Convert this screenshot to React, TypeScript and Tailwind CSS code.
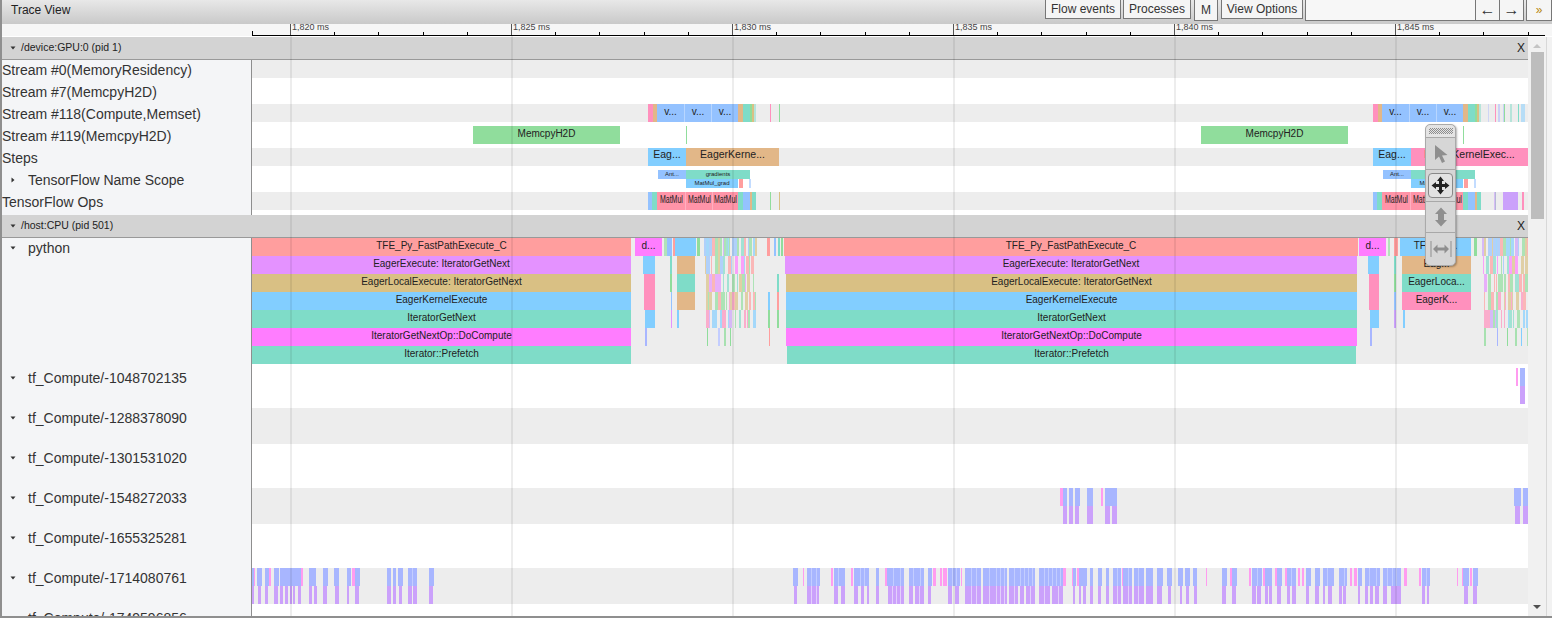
import type { ReactNode } from "react"

const salmon = "#ff9e9e"
const purple = "#e492ff"
const tan = "#d9c084"
const blue = "#82ceff"
const teal = "#7fdcc8"
const magenta = "#ff7dff"
const peach = "#e2b788"
const pink = "#ff90bd"
const periwinkle = "#94c2ff"
const green = "#90dd9c"
const lav = "#a8b6ff"
const violet = "#cba1fb"
const hot = "#ff9cf0"

type Seg = [number, number, string, string?]

// page x coordinates, the tracks start at 252
function Bar({ x0, x1, top, h = 18, c, label, fs = "text-[10px]", squeeze }: { x0: number; x1: number; top: number; h?: number; c: string; label?: string; fs?: string; squeeze?: boolean }) {
  return (
    <div
      className={`absolute flex items-center justify-center overflow-hidden whitespace-nowrap text-[#222] ${fs}`}
      style={{ left: x0 - 252, width: x1 - x0, top, height: h, backgroundColor: c }}
    >
      {label && <span className={`shrink-0 ${h > 9 ? "-mt-1" : ""} ${squeeze ? "scale-x-[0.7]" : ""}`}>{label}</span>}
    </div>
  )
}

function Segs({ items, top, h = 18, fs, squeeze }: { items: Seg[]; top: number; h?: number; fs?: string; squeeze?: boolean }) {
  return (
    <>
      {items.map((s, i) => (
        <Bar key={i} x0={s[0]} x1={s[1]} top={top} h={h} c={s[2]} label={s[3]} fs={fs} squeeze={squeeze} />
      ))}
    </>
  )
}

function Arrow({ open }: { open: boolean }) {
  return (
    <svg width="6" height="6" viewBox="0 0 6 6" className="shrink-0">
      {open ? <path d="M0.5 1.5 L5.5 1.5 L3 4.5 Z" fill="#333" /> : <path d="M1.5 0.5 L4.5 3 L1.5 5.5 Z" fill="#333" />}
    </svg>
  )
}

function Track({ label, arrow, gray, height, children }: { label: string; arrow?: "open" | "closed"; gray?: boolean; height: number; children?: ReactNode }) {
  return (
    <div className="flex shrink-0" style={{ height }}>
      <div className="w-[250px] shrink-0 border-r border-[#8e8e8e]">
        <div className={`flex h-[18px] items-center whitespace-nowrap text-sm leading-[18px] text-[#333] ${gray ? "mt-px" : "mt-[5px]"} ${arrow ? "pl-2" : ""}`}>
          {arrow && <Arrow open={arrow === "open"} />}
          <span className={arrow ? "ml-[12px]" : ""}>{label}</span>
        </div>
      </div>
      <div className={`relative flex-1 ${gray ? "bg-[#ededed]" : "bg-white"}`}>{children}</div>
    </div>
  )
}

function ProcessHeader({ name, h }: { name: string; h: string }) {
  return (
    <div className={`flex shrink-0 items-center justify-between border-b border-[#999] bg-[#d3d3d3] pr-[3px] pl-2 text-[10px] text-[#222] ${h}`}>
      <div className="flex items-center gap-[5px]">
        <Arrow open />
        <span className="text-[10.5px]">{name}</span>
      </div>
      <span className="text-xs">X</span>
    </div>
  )
}

function ToolButton({ children, w, h = "h-5" }: { children: ReactNode; w: string; h?: string }) {
  return (
    <div className={`flex items-center justify-center border border-[#777] bg-[#f5f5f5] text-xs text-[#333] ${w} ${h}`}>{children}</div>
  )
}

// Deterministic thin coloured stripes for the busy parts of the trace
function stripes(x0: number, x1: number, seed: number, colors: string[], density = 0.6): Seg[] {
  const out: Seg[] = []
  let s = seed
  let x = x0
  while (x < x1) {
    s = (s * 1103515245 + 12345) & 0x7fffffff
    const w = 1 + (s >> 8) % 3
    const gap = (s >> 12) % 100 < density * 100 ? 0 : 1 + (s >> 16) % 3
    out.push([x, Math.min(x + w, x1), colors[(s >> 18) % colors.length] + "b0"])
    x += w + gap
  }
  return out
}

const busy = [salmon, periwinkle, green, teal, violet, tan, blue, green]

const pyRows: Seg[][] = [
  [
    [252, 631, salmon, "TFE_Py_FastPathExecute_C"],
    [635, 662, magenta, "d..."],
    [664, 667, green + "a0"],
    [667, 672, periwinkle],
    [673, 675, salmon],
    [675, 696, blue],
    [697, 700, green],
    ...stripes(704, 757, 11, busy, 0.85),
    [767, 770, salmon],
    [774, 776, periwinkle],
    [778, 780, teal],
    [781, 783, green],
    [784, 1358, salmon, "TFE_Py_FastPathExecute_C"],
    [1359, 1386, magenta, "d..."],
    [1388, 1390, green + "a0"],
    [1394, 1398, salmon],
    [1400, 1471, blue, "TFE_Py..."],
    [1474, 1477, green],
    ...stripes(1482, 1528, 23, busy, 0.85),
  ],
  [
    [252, 631, purple, "EagerExecute: IteratorGetNext"],
    [643, 655, blue],
    [670, 672, teal],
    [677, 695, peach],
    ...stripes(705, 756, 37, [salmon, teal, magenta, green, tan, periwinkle], 0.45),
    [785, 1357, purple, "EagerExecute: IteratorGetNext"],
    [1368, 1379, blue],
    [1394, 1396, teal],
    [1402, 1471, peach, "Eag..."],
    ...stripes(1483, 1528, 41, [salmon, teal, magenta, green, tan, periwinkle], 0.45),
  ],
  [
    [252, 631, tan, "EagerLocalExecute: IteratorGetNext"],
    [644, 655, pink],
    [670, 672, green],
    [677, 695, teal],
    ...stripes(706, 756, 53, [teal, green, purple, tan, salmon], 0.4),
    [777, 779, teal],
    [786, 1357, tan, "EagerLocalExecute: IteratorGetNext"],
    [1369, 1379, pink],
    [1394, 1396, green],
    [1402, 1471, teal, "EagerLoca..."],
    ...stripes(1484, 1528, 61, [teal, green, purple, tan, salmon], 0.4),
  ],
  [
    [252, 631, blue, "EagerKernelExecute"],
    [644, 655, pink],
    [671, 672, periwinkle],
    [677, 695, peach],
    ...stripes(706, 756, 71, [pink, green, salmon, tan], 0.55),
    [768, 770, blue],
    [777, 779, salmon],
    [786, 1357, blue, "EagerKernelExecute"],
    [1369, 1379, pink],
    [1394, 1396, periwinkle],
    [1402, 1471, pink, "EagerK..."],
    ...stripes(1484, 1528, 83, [pink, green, salmon, tan], 0.55),
  ],
  [
    [252, 631, teal, "IteratorGetNext"],
    [645, 655, blue],
    [671, 672, purple],
    [677, 679, blue],
    ...stripes(706, 756, 97, [pink, violet, teal, blue, green], 0.45),
    [768, 770, green],
    [777, 779, green],
    [786, 1357, teal, "IteratorGetNext"],
    [1370, 1379, blue],
    [1394, 1396, violet],
    [1403, 1405, blue],
    ...stripes(1484, 1528, 101, [pink, violet, teal, blue, green], 0.45),
  ],
  [
    [252, 631, magenta, "IteratorGetNextOp::DoCompute"],
    [645, 647, lav],
    [707, 708, green],
    [718, 720, "#c3cdff"],
    [724, 726, green + "c0"],
    [730, 731, green],
    [769, 770, salmon],
    [786, 1357, magenta, "IteratorGetNextOp::DoCompute"],
    [1370, 1372, lav],
    [1484, 1486, green + "c0"],
    [1497, 1498, lav],
    [1507, 1508, green],
    [1515, 1517, green + "c0"],
    [1521, 1522, blue],
    [1527, 1528, green + "a0"],
  ],
  [
    [252, 631, teal, "Iterator::Prefetch"],
    [787, 1356, teal, "Iterator::Prefetch"],
  ],
]

const t1718 = {
  blue: [[252, 254], [257, 262], [265, 269], [274, 279], [280, 285], [285, 288], [288, 292], [292, 296], [296, 301], [309, 316], [323, 328], [334, 339], [347, 351], [355, 360], [387, 391], [393, 396], [398, 403], [408, 417], [429, 434], [793, 798], [807, 820], [834, 845], [854, 869], [876, 879], [887, 904], [909, 924], [928, 932], [948, 960], [965, 981], [983, 1007], [1009, 1035], [1039, 1063], [1073, 1076], [1079, 1087], [1090, 1093], [1098, 1102], [1106, 1109], [1113, 1121], [1123, 1132], [1134, 1144], [1146, 1153], [1157, 1163], [1167, 1172], [1178, 1183], [1185, 1190], [1193, 1197], [1222, 1227], [1232, 1237], [1252, 1262], [1265, 1272], [1277, 1282], [1287, 1296], [1306, 1311], [1315, 1320], [1323, 1334], [1339, 1347], [1358, 1362], [1365, 1380], [1383, 1401], [1422, 1430], [1463, 1469], [1473, 1478]],
  violet: [[252, 254], [258, 261], [265, 268], [274, 278], [280, 283], [285, 288], [290, 292], [293, 295], [298, 301], [309, 312], [314, 317], [323, 327], [335, 339], [347, 349], [355, 359], [387, 391], [393, 396], [399, 402], [408, 412], [413, 417], [429, 433], [794, 797], [807, 819], [834, 838], [841, 845], [854, 858], [861, 864], [867, 869], [876, 879], [888, 904], [909, 913], [915, 924], [928, 931], [948, 952], [955, 959], [965, 981], [983, 1007], [1009, 1018], [1020, 1024], [1026, 1035], [1039, 1050], [1052, 1063], [1073, 1075], [1079, 1081], [1083, 1086], [1090, 1093], [1098, 1101], [1106, 1109], [1113, 1121], [1123, 1132], [1134, 1144], [1146, 1153], [1157, 1162], [1168, 1171], [1180, 1182], [1186, 1189], [1194, 1197], [1222, 1226], [1232, 1236], [1252, 1256], [1257, 1261], [1265, 1268], [1269, 1272], [1277, 1281], [1287, 1290], [1292, 1296], [1306, 1309], [1315, 1319], [1323, 1325], [1328, 1332], [1339, 1342], [1343, 1346], [1358, 1360], [1365, 1368], [1370, 1373], [1375, 1379], [1383, 1387], [1391, 1397], [1397, 1401], [1422, 1425], [1427, 1429], [1464, 1468], [1473, 1477]],
  hot: [[253, 255], [269, 271], [301, 303], [352, 355], [803, 804], [831, 833], [851, 853], [866, 868], [885, 887], [913, 915], [933, 936], [940, 942], [943, 947], [961, 962], [1063, 1066], [1072, 1073], [1077, 1079], [1122, 1123], [1206, 1207], [1230, 1232], [1249, 1251], [1263, 1265], [1275, 1277], [1285, 1287], [1298, 1300], [1302, 1304], [1350, 1352], [1354, 1357], [1388, 1390], [1404, 1407], [1419, 1421], [1457, 1458], [1462, 1463], [1470, 1472]],
}

const ticks = [290, 511, 732, 953, 1174, 1395]

// long runs are really many short events, so they get faint seams
function pairs(list: number[][], c: string, seam?: string): Seg[] {
  const out: Seg[] = []
  for (const [a, b] of list) {
    out.push([a, b, c])
    if (seam && b - a > 7) {
      for (let x = a + 4 + (a % 3); x < b - 2; x += 4 + ((x * 7) % 4)) out.push([x, x + 1, seam])
    }
  }
  return out
}

export default function App() {
  return (
    <div className="relative flex h-screen w-[1552px] flex-col overflow-hidden border-b-2 border-l-2 border-[#8f8f8f] bg-[#f4f5f7] font-['Liberation_Sans',Arial,sans-serif]">
      {/* toolbar */}
      <div className="relative z-10 flex h-6 shrink-0 items-start justify-between bg-gradient-to-b from-[#e8e8e8] to-[#c9c9c9] pl-[9px]">
        <span className="mt-[2px] text-xs text-[#222]">Trace View</span>
        <div className="-mt-[1px] flex items-start">
          <div className="mr-[2px]"><ToolButton w="w-[76px]" h="h-[20px]">Flow events</ToolButton></div>
          <div className="mr-[3px]"><ToolButton w="w-[68px]" h="h-[20px]">Processes</ToolButton></div>
          <div className="mr-[3px]"><ToolButton w="w-[24px]" h="h-[22px]">M</ToolButton></div>
          <div className="mr-[2px]"><ToolButton w="w-[82px]" h="h-[20px]">View Options</ToolButton></div>
          <div className="h-[22px] w-[171px] border border-[#777] bg-[#f7f7f7]" />
          <div className="-ml-px flex h-[22px] w-[25px] items-center justify-center border border-[#777] bg-[#f5f5f5] text-base leading-none text-[#333]">←</div>
          <div className="-ml-px flex h-[22px] w-[25px] items-center justify-center border border-[#777] bg-[#f5f5f5] text-base leading-none text-[#333]">→</div>
          <div className="ml-[2px] flex h-[22px] w-[26px] items-center justify-center border border-[#777] bg-[#f5f5f5] text-xs text-[#b8860b]">»</div>
        </div>
      </div>

      {/* ruler */}
      <div className="flex h-3 shrink-0 bg-[#f6f6f6]">
        <div className="w-[250px] shrink-0" />
        <div className="relative w-[1293px] overflow-hidden border-b border-black bg-[#f6f6f6]">
          <div className="absolute bottom-0 left-0 h-[4px] w-px bg-black" />
          {Array.from({ length: 30 }, (_, i) => (
            <div key={i} className="absolute bottom-0 h-[3px] w-px bg-black" style={{ left: 38 + i * 44.2 }} />
          ))}
          {ticks.map((t, i) => (
            <div key={t} className="absolute top-0 bottom-0 w-px bg-[#555]" style={{ left: t - 252 }}>
              <span className="absolute top-[-3px] left-[2px] whitespace-nowrap text-[9px] leading-[13px] text-[#444]">{`1,${820 + i * 5} ms`}</span>
            </div>
          ))}
        </div>
      </div>
      <div className="h-px shrink-0 bg-white" />

      {/* tracks + scrollbar */}
      <div className="flex min-h-0 flex-1">
        <div className="flex w-[1526px] shrink-0 flex-col overflow-hidden">
          <ProcessHeader name="/device:GPU:0 (pid 1)" h="h-[23px]" />
          <Track label="Stream #0(MemoryResidency)" gray height={18} />
          <Track label="Stream #7(MemcpyH2D)" height={26} />
          <Track label="Stream #118(Compute,Memset)" gray height={18}>
            {[0, 725].map((d) => (
              <Segs
                key={d}
                top={0}
                items={[
                  [648 + d, 653 + d, pink],
                  [653 + d, 657 + d, peach],
                  [657 + d, 684 + d, periwinkle, "v..."],
                  [684 + d, 685 + d, "#b8d6ff"],
                  [685 + d, 711 + d, periwinkle, "v..."],
                  [711 + d, 712 + d, "#b8d6ff"],
                  [712 + d, 738 + d, periwinkle, "v..."],
                  [738 + d, 743 + d, peach],
                  [743 + d, 750 + d, teal],
                  [750 + d, 752 + d, green],
                  [752 + d, 754 + d, tan],
                  [754 + d, 756 + d, teal + "80"],
                  [770 + d, 771 + d, pink],
                  [779 + d, 780 + d, green],
                ]}
              />
            ))}
            <Segs top={0} items={[[1488, 1489, lav + "70"], [1498, 1500, lav + "80"], [1503, 1504, lav + "80"], [1510, 1512, teal + "80"], [1518, 1519, teal], [1521, 1525, blue + "80"]]} />
          </Track>
          <Track label="Stream #119(MemcpyH2D)" height={26}>
            <Segs top={4} items={[[473, 620, green, "MemcpyH2D"], [686, 687, green], [1201, 1348, green, "MemcpyH2D"], [1463, 1464, green]]} />
          </Track>
          <Track label="Steps" gray height={18}>
            <Segs
              top={0}
              fs="text-[10.5px]"
              items={[[648, 686, blue, "Eag..."], [686, 779, peach, "EagerKerne..."], [1373, 1411, blue, "Eag..."], [1411, 1528, pink, "EagerKernelExec..."]]}
            />
          </Track>
          <Track label="TensorFlow Name Scope" arrow="closed" height={26}>
            <Segs top={4} h={9} fs="text-[6px]" items={[[658, 686, periwinkle, "Ant..."], [686, 750, teal, "gradients"], [1383, 1411, periwinkle, "Ant..."], [1411, 1475, teal, "gradients"]]} />
            <Segs top={13} h={9} fs="text-[6px]" items={[[686, 738, blue, "MatMul_grad"], [739, 743, salmon], [749, 751, "#c3dcff"], [1411, 1463, blue, "MatMul_grad"], [1464, 1468, salmon], [1474, 1476, "#c3dcff"]]} />
          </Track>
          <Track label="TensorFlow Ops" gray height={18}>
            {[0, 725].map((d) => (
              <Segs
                key={d}
                top={0}
                squeeze
                items={[
                  [648 + d, 652 + d, periwinkle],
                  [652 + d, 657 + d, teal],
                  [657 + d, 685 + d, "#ff94a8", "MatMul"],
                  [685 + d, 686 + d, "#ffb0c0"],
                  [686 + d, 712 + d, "#ff94a8", "MatMul"],
                  [712 + d, 713 + d, "#ffb0c0"],
                  [713 + d, 738 + d, "#ff94a8", "MatMul"],
                  [738 + d, 743 + d, teal],
                  [743 + d, 750 + d, periwinkle],
                  [750 + d, 752 + d, peach],
                  [752 + d, 756 + d, teal],
                  [770 + d, 771 + d, green],
                  [779 + d, 780 + d, tan],
                ]}
              />
            ))}
            <Segs top={0} items={[[1494, 1496, violet + "a0"], [1503, 1518, violet], [1522, 1524, pink]]} />
          </Track>
          <div className="flex h-[5px] shrink-0">
            <div className="w-[250px] shrink-0 border-r border-[#8e8e8e]" />
            <div className="flex-1 bg-white" />
          </div>
          <ProcessHeader name="/host:CPU (pid 501)" h="h-[23px]" />
          <Track label="python" arrow="open" gray height={126}>
            {pyRows.map((row, i) => (
              <Segs key={i} top={i * 18} items={row} />
            ))}
          </Track>
          <Track label="tf_Compute/-1048702135" arrow="open" height={44}>
            <Segs top={4} items={[[1516, 1518, hot], [1520, 1525, lav]]} />
            <Segs top={22} items={[[1520, 1525, violet]]} />
          </Track>
          <Track label="tf_Compute/-1288378090" arrow="open" gray height={36} />
          <Track label="tf_Compute/-1301531020" arrow="open" height={44} />
          <Track label="tf_Compute/-1548272033" arrow="open" gray height={36}>
            <Segs top={0} items={[[1060, 1063, hot], [1063, 1067, lav], [1069, 1073, lav], [1075, 1080, lav], [1087, 1093, lav], [1101, 1103, hot], [1105, 1117, lav], [1514, 1521, lav], [1523, 1528, lav]]} />
            <Segs top={18} items={[[1063, 1067, violet], [1069, 1073, violet], [1075, 1079, violet], [1087, 1093, violet], [1105, 1110, violet], [1112, 1117, violet], [1515, 1520, violet], [1523, 1528, violet]]} />
          </Track>
          <Track label="tf_Compute/-1655325281" arrow="open" height={44} />
          <Track label="tf_Compute/-1714080761" arrow="open" gray height={36}>
            <Segs top={0} items={[...pairs(t1718.hot, hot), ...pairs(t1718.blue, lav, "#c3cdff")]} />
            <Segs top={18} items={pairs(t1718.violet, violet, "#e3d0fb")} />
          </Track>
          <Track label="tf_Compute/-1749596856" arrow="open" height={44} />
        </div>

        {/* scrollbar */}
        <div className="flex w-[18px] shrink-0 flex-col items-center bg-[#f1f1f1]">
          <svg width="10" height="6" viewBox="0 0 10 6" className="mt-[6px]">
            <path d="M1 5 L9 5 L5 1 Z" fill="#c4c4c4" />
          </svg>
          <div className="mt-[3px] h-[167px] w-[13px] bg-[#bdbdbd]" />
          <div className="flex-1" />
          <svg width="10" height="6" viewBox="0 0 10 6" className="mb-[6px]">
            <path d="M1 1 L9 1 L5 5 Z" fill="#505050" />
          </svg>
        </div>
        <div className="w-[6px] shrink-0 border-l border-[#d8d8d8] bg-[#f2f2f2]" />
      </div>

      {/* grid lines over the trace */}
      {ticks.map((t) => (
        <div key={t} className="pointer-events-none absolute top-[36px] bottom-0 w-[2px] bg-[#00000012]" style={{ left: t - 2 }} />
      ))}

      {/* mouse mode selector */}
      <div className="absolute top-[124px] left-[1423px] flex h-[142px] w-[31px] flex-col rounded-[5px] border border-[#aaa] bg-[#d6d6d6] shadow-[1px_1px_2px_#0000004d]">
        <div className="flex h-[13px] items-center justify-center rounded-t-[5px] border-b border-[#a8a8a8] bg-[#e4e4e4]">
          <div className="h-[6px] w-[24px] bg-[repeating-conic-gradient(#777_0_25%,transparent_0_50%)] bg-[length:2px_2px] opacity-80" />
        </div>
        <div className="flex h-[32px] items-center justify-center border-b border-[#a8a8a8]">
          <svg width="18" height="20" viewBox="0 0 18 20">
            <path d="M3 1 L3 16 L7 12.5 L10 19 L13 17.5 L10 11.5 L15.5 11 Z" fill="#8f8f8f" />
          </svg>
        </div>
        <div className="flex h-[32px] items-center justify-center border-b border-[#a8a8a8]">
          <div className="flex h-[25px] w-[25px] items-center justify-center rounded-[4px] border border-[#888] bg-[#e2e2e2]">
            <svg width="19" height="19" viewBox="0 0 19 19">
              <path d="M9.5 0.5 L13 5 L11 5 L11 8 L14 8 L14 6 L18.5 9.5 L14 13 L14 11 L11 11 L11 14 L13 14 L9.5 18.5 L6 14 L8 14 L8 11 L5 11 L5 13 L0.5 9.5 L5 6 L5 8 L8 8 L8 5 L6 5 Z" fill="#222" />
            </svg>
          </div>
        </div>
        <div className="flex h-[31px] items-center justify-center border-b border-[#a8a8a8]">
          <svg width="14" height="20" viewBox="0 0 14 20">
            <path d="M7 0.5 L13 7 L10 7 L10 13 L13 13 L7 19.5 L1 13 L4 13 L4 7 L1 7 Z" fill="#8f8f8f" />
          </svg>
        </div>
        <div className="flex flex-1 items-center justify-center">
          <svg width="22" height="18" viewBox="0 0 22 18">
            <path d="M1 1 L1 17 M21 1 L21 17" stroke="#8f8f8f" strokeWidth="1" fill="none" />
            <path d="M3 9 L7.5 4.5 L7.5 7.5 L14.5 7.5 L14.5 4.5 L19 9 L14.5 13.5 L14.5 10.5 L7.5 10.5 L7.5 13.5 Z" fill="#8f8f8f" />
          </svg>
        </div>
      </div>
    </div>
  )
}
